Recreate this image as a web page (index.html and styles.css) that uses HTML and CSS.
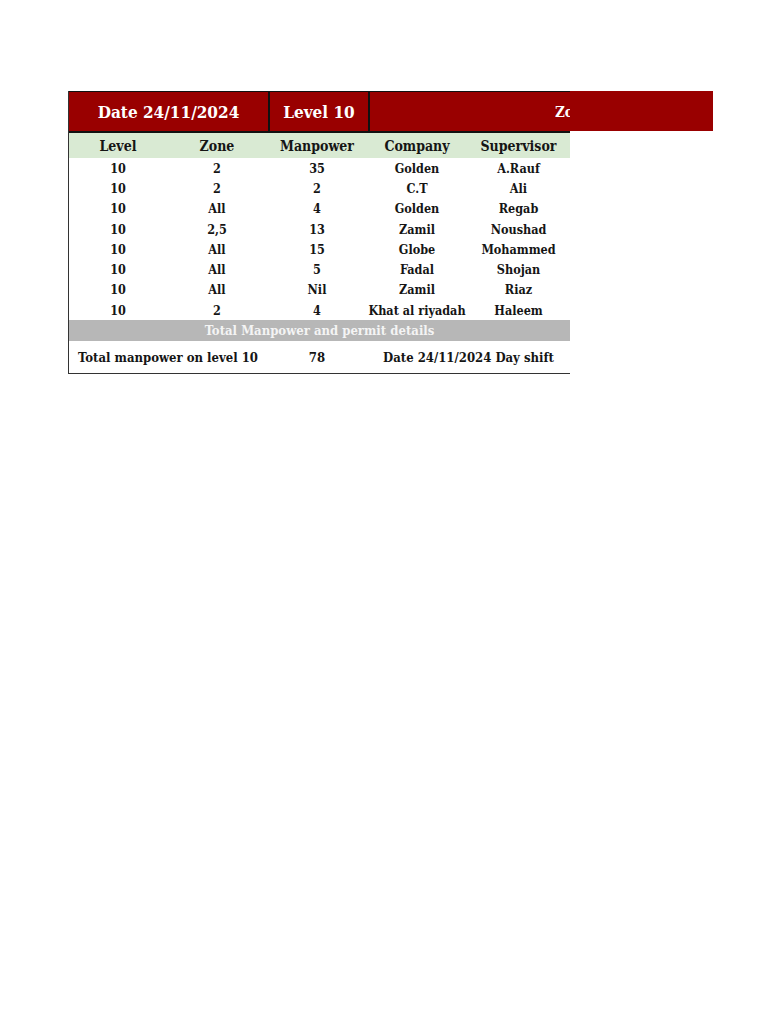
FILE: index.html
```html
<!DOCTYPE html>
<html>
<head>
<meta charset="utf-8">
<link rel="stylesheet" href="styles.css">
</head>
<body>
<div class="sheet">
  <div class="table">
    <div class="head">
      <div class="h-date">Date 24/11/2024</div>
      <div class="h-level">Level 10</div>
      <div class="h-zone"><span>Zone</span></div>
    </div>
    <div class="grid cols">
      <div>Level</div><div>Zone</div><div>Manpower</div><div>Company</div><div>Supervisor</div>
    </div>
    <div class="grid row"><div>10</div><div>2</div><div>35</div><div>Golden</div><div>A.Rauf</div></div>
    <div class="grid row"><div>10</div><div>2</div><div>2</div><div>C.T</div><div>Ali</div></div>
    <div class="grid row"><div>10</div><div>All</div><div>4</div><div>Golden</div><div>Regab</div></div>
    <div class="grid row"><div>10</div><div>2,5</div><div>13</div><div>Zamil</div><div>Noushad</div></div>
    <div class="grid row"><div>10</div><div>All</div><div>15</div><div>Globe</div><div>Mohammed</div></div>
    <div class="grid row"><div>10</div><div>All</div><div>5</div><div>Fadal</div><div>Shojan</div></div>
    <div class="grid row"><div>10</div><div>All</div><div>Nil</div><div>Zamil</div><div>Riaz</div></div>
    <div class="grid row"><div>10</div><div>2</div><div>4</div><div>Khat al riyadah</div><div>Haleem</div></div>
    <div class="band">Total Manpower and permit details</div>
    <div class="grid total">
      <div class="span2">Total manpower on level 10</div>
      <div>78</div>
      <div class="span2">Date 24/11/2024 Day shift</div>
    </div>
  </div>
  <div class="ext"></div>
</div>
</body>
</html>
```

FILE: styles.css
```css
html, body {
  margin: 0;
  padding: 0;
  background: #ffffff;
}

body {
  font-family: "DejaVu Serif", "Liberation Serif", serif;
  font-stretch: condensed;
  font-weight: bold;
  color: #151515;
}

.sheet {
  display: flex;
  align-items: flex-start;
  padding: 91px 0 0 68px;
}

.table {
  width: 501px;
  overflow: hidden;
  border-left: 1px solid #333;
  border-bottom: 1px solid #333;
}

.head {
  display: flex;
  height: 39px;
  background: #990000;
  color: #ffffff;
  border-top: 1px solid #111;
  border-bottom: 2px solid #111;
  font-size: 17px;
}

.head > div {
  display: flex;
  align-items: center;
  justify-content: center;
  white-space: nowrap;
}

.h-date {
  width: 199px;
  border-right: 2px solid #111;
  flex: none;
}

.h-level {
  width: 98px;
  border-right: 2px solid #111;
  flex: none;
}

.h-zone {
  flex: none;
  width: 400px;
  justify-content: flex-start !important;
  padding-left: 185px;
  font-size: 15px;
}

.grid {
  display: grid;
  grid-template-columns: 98px 100px 100px 100px 103px;
  align-items: center;
  text-align: center;
}

.cols {
  height: 25px;
  background: #d9ead3;
  font-size: 14px;
}

.row {
  height: 20.3px;
  font-size: 12.5px;
}

.band {
  height: 21px;
  background: #b7b7b7;
  color: #f4f4f4;
  font-size: 13px;
  display: flex;
  align-items: center;
  justify-content: center;
}

.total {
  height: 32px;
  font-size: 13px;
}

.span2 {
  grid-column: span 2;
}

.ext {
  width: 143px;
  height: 40px;
  background: #990000;
  flex: none;
}
```
